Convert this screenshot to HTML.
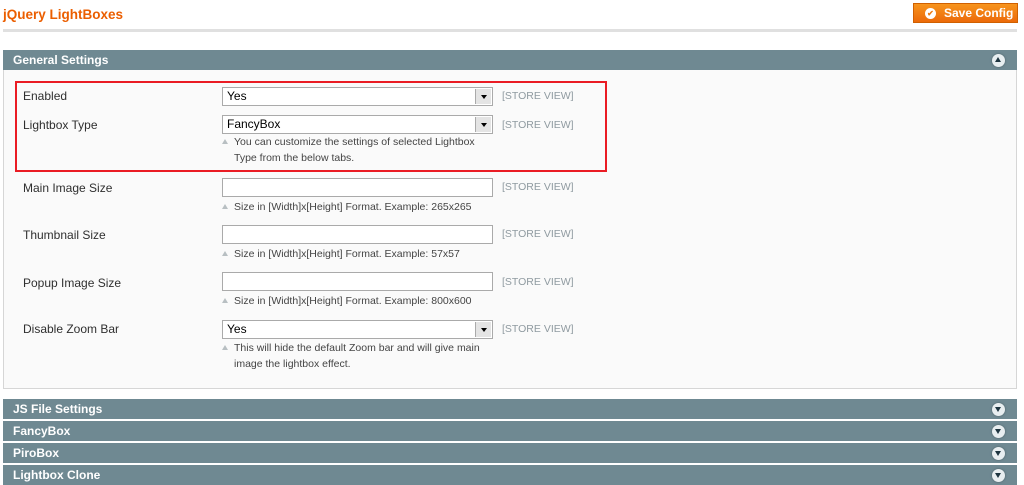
<!DOCTYPE html>
<html><head><style>
*{margin:0;padding:0;box-sizing:border-box}
body{width:1024px;height:480px;overflow:hidden;background:#fff;font-family:"Liberation Sans",Arial,sans-serif;font-size:12px;color:#2f2f2f;position:relative}
.abs{position:absolute}
.title{left:3px;top:7px;color:#eb5e00;font-weight:bold;font-size:13.5px}
.line{left:3px;top:29px;width:1014px;height:3px;background:#e0e0e0}
.btn{left:913px;top:3px;width:105px;height:20px;background:linear-gradient(#f7941d,#ec6a0a);border:1px solid #d06000;color:#fff;font-weight:bold;font-size:12px;line-height:18px;padding-left:30px}
.btn i{position:absolute;left:11px;top:4px;width:11px;height:11px;border-radius:50%;background:#fff;color:#ee7a10;font-size:8px;line-height:11px;text-align:center;font-style:normal}
.bar{left:3px;width:1014px;height:20px;background:#6f8992;color:#fff;font-weight:bold;font-size:12px;line-height:20px;padding-left:10px}
.ic{position:absolute;right:12px;top:4px;width:13px;height:13px;border-radius:50%;background:#e8eef0;box-shadow:0 0 2px #4b5f66}
.ic:after{content:"";position:absolute;left:3px;top:4px;border-left:3.5px solid transparent;border-right:3.5px solid transparent;border-top:5px solid #1e3540}
.ic.up:after{border-top:none;border-bottom:5px solid #1e3540;top:3px}
.panel{left:3px;top:70px;width:1014px;height:319px;background:#fafafa;border:1px solid #d6d6d6;border-top:none}
.red{left:15px;top:81px;width:592px;height:91px;border:2px solid #ea1c24}
.lab{left:23px;font-size:12px}
.inp{left:222px;width:271px;height:19px;background:#fff;border:1px solid #aaa;font-size:12px;line-height:17px;padding-left:4px;color:#000}
.sel:after{content:"";position:absolute;right:1px;top:1px;width:15px;height:15px;background:#e4e4e4;border-left:1px solid #aaa}
.sel:before{content:"";position:absolute;right:5px;top:7px;z-index:1;border-left:3.5px solid transparent;border-right:3.5px solid transparent;border-top:4px solid #000}
.sv{left:502px;font-size:10.5px;color:#8f9aa0}
.note{left:222px;font-size:10.5px;color:#444;line-height:16px}
.note b{display:inline-block;width:0;height:0;border-left:3px solid transparent;border-right:3px solid transparent;border-bottom:5px solid #b8bfc2;margin-right:6px;vertical-align:1px}
</style></head><body>
<div class="abs title">jQuery LightBoxes</div>
<div class="abs line"></div>
<div class="abs btn"><i>✔</i>Save Config</div>
<div class="abs bar" style="top:50px">General Settings<span class="ic up"></span></div>
<div class="abs panel"></div>
<div class="abs red"></div>

<div class="abs lab" style="top:89px">Enabled</div>
<div class="abs inp sel" style="top:87px">Yes</div>
<div class="abs sv" style="top:90px">[STORE VIEW]</div>

<div class="abs lab" style="top:118px">Lightbox Type</div>
<div class="abs inp sel" style="top:115px">FancyBox</div>
<div class="abs sv" style="top:119px">[STORE VIEW]</div>
<div class="abs note" style="top:134px"><b></b>You can customize the settings of selected Lightbox<br><span style="padding-left:12px">Type from the below tabs.</span></div>

<div class="abs lab" style="top:181px">Main Image Size</div>
<div class="abs inp" style="top:178px"></div>
<div class="abs sv" style="top:181px">[STORE VIEW]</div>
<div class="abs note" style="top:199px"><b></b>Size in [Width]x[Height] Format. Example: 265x265</div>

<div class="abs lab" style="top:228px">Thumbnail Size</div>
<div class="abs inp" style="top:225px"></div>
<div class="abs sv" style="top:228px">[STORE VIEW]</div>
<div class="abs note" style="top:246px"><b></b>Size in [Width]x[Height] Format. Example: 57x57</div>

<div class="abs lab" style="top:276px">Popup Image Size</div>
<div class="abs inp" style="top:272px"></div>
<div class="abs sv" style="top:276px">[STORE VIEW]</div>
<div class="abs note" style="top:293px"><b></b>Size in [Width]x[Height] Format. Example: 800x600</div>

<div class="abs lab" style="top:322px">Disable Zoom Bar</div>
<div class="abs inp sel" style="top:320px">Yes</div>
<div class="abs sv" style="top:323px">[STORE VIEW]</div>
<div class="abs note" style="top:340px"><b></b>This will hide the default Zoom bar and will give main<br><span style="padding-left:12px">image the lightbox effect.</span></div>

<div class="abs bar" style="top:399px">JS File Settings<span class="ic"></span></div>
<div class="abs bar" style="top:421px">FancyBox<span class="ic"></span></div>
<div class="abs bar" style="top:443px">PiroBox<span class="ic"></span></div>
<div class="abs bar" style="top:465px">Lightbox Clone<span class="ic"></span></div>
</body></html>
